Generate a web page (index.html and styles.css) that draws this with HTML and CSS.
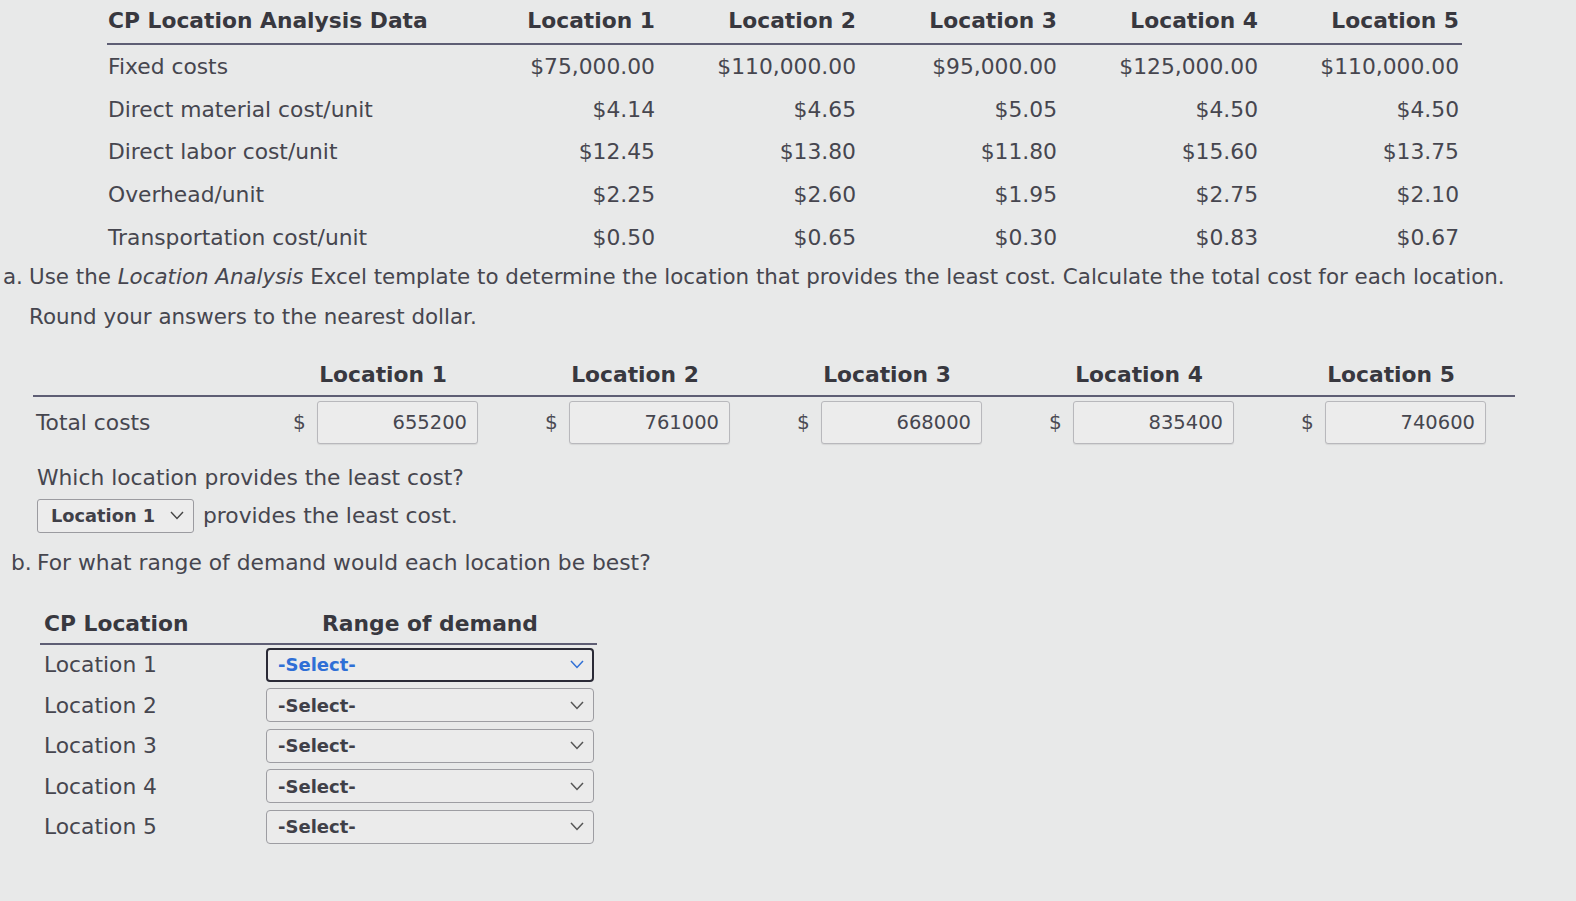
FILE: index.html
```html
<!DOCTYPE html>
<html lang="en">
<head>
<meta charset="utf-8">
<title>CP Location Analysis</title>
<link rel="stylesheet" href="styles.css">
</head>
<body>
<div class="page">
  <div class="data-table">
    <div class="dt-row dt-head">
      <div class="dt-label">CP Location Analysis Data</div>
      <div class="dt-num">Location 1</div>
      <div class="dt-num">Location 2</div>
      <div class="dt-num">Location 3</div>
      <div class="dt-num">Location 4</div>
      <div class="dt-num">Location 5</div>
    </div>
    <div class="dt-row">
      <div class="dt-label">Fixed costs</div>
      <div class="dt-num">$75,000.00</div>
      <div class="dt-num">$110,000.00</div>
      <div class="dt-num">$95,000.00</div>
      <div class="dt-num">$125,000.00</div>
      <div class="dt-num">$110,000.00</div>
    </div>
    <div class="dt-row">
      <div class="dt-label">Direct material cost/unit</div>
      <div class="dt-num">$4.14</div>
      <div class="dt-num">$4.65</div>
      <div class="dt-num">$5.05</div>
      <div class="dt-num">$4.50</div>
      <div class="dt-num">$4.50</div>
    </div>
    <div class="dt-row">
      <div class="dt-label">Direct labor cost/unit</div>
      <div class="dt-num">$12.45</div>
      <div class="dt-num">$13.80</div>
      <div class="dt-num">$11.80</div>
      <div class="dt-num">$15.60</div>
      <div class="dt-num">$13.75</div>
    </div>
    <div class="dt-row">
      <div class="dt-label">Overhead/unit</div>
      <div class="dt-num">$2.25</div>
      <div class="dt-num">$2.60</div>
      <div class="dt-num">$1.95</div>
      <div class="dt-num">$2.75</div>
      <div class="dt-num">$2.10</div>
    </div>
    <div class="dt-row">
      <div class="dt-label">Transportation cost/unit</div>
      <div class="dt-num">$0.50</div>
      <div class="dt-num">$0.65</div>
      <div class="dt-num">$0.30</div>
      <div class="dt-num">$0.83</div>
      <div class="dt-num">$0.67</div>
    </div>
  </div>

  <div class="question q-a">
    <span class="q-marker">a.</span>
    <span class="q-text">Use the <em>Location Analysis</em> Excel template to determine the location that provides the least cost. Calculate the total cost for each location.<br>Round your answers to the nearest dollar.</span>
  </div>

  <div class="cost-table">
    <div class="ct-row ct-head">
      <div class="ct-label"></div>
      <div class="ct-cell"><span class="ct-title">Location 1</span></div>
      <div class="ct-cell"><span class="ct-title">Location 2</span></div>
      <div class="ct-cell"><span class="ct-title">Location 3</span></div>
      <div class="ct-cell"><span class="ct-title">Location 4</span></div>
      <div class="ct-cell"><span class="ct-title">Location 5</span></div>
    </div>
    <div class="ct-row ct-body">
      <div class="ct-label">Total costs</div>
      <div class="ct-cell"><span class="dollar">$</span><input class="answer" type="text" value="655200" readonly></div>
      <div class="ct-cell"><span class="dollar">$</span><input class="answer" type="text" value="761000" readonly></div>
      <div class="ct-cell"><span class="dollar">$</span><input class="answer" type="text" value="668000" readonly></div>
      <div class="ct-cell"><span class="dollar">$</span><input class="answer" type="text" value="835400" readonly></div>
      <div class="ct-cell"><span class="dollar">$</span><input class="answer" type="text" value="740600" readonly></div>
    </div>
  </div>

  <p class="which">Which location provides the least cost?</p>
  <div class="least-row">
    <div class="mini-select">
      <span>Location 1</span>
      <svg class="chev" width="14" height="9" viewBox="0 0 14 9"><polyline points="1,1 7,7.5 13,1" fill="none" stroke="#444" stroke-width="1.4"/></svg>
    </div>
    <span class="least-text">provides the least cost.</span>
  </div>

  <div class="question q-b">
    <span class="q-marker">b.</span>
    <span class="q-text">For what range of demand would each location be best?</span>
  </div>

  <div class="range-table">
    <div class="rt-row rt-head">
      <div class="rt-label">CP Location</div>
      <div class="rt-sel-head">Range of demand</div>
    </div>
    <div class="rt-body">
      <div class="rt-row">
        <div class="rt-label">Location 1</div>
        <div class="select focused"><span>-Select-</span><svg class="chev" width="14" height="9" viewBox="0 0 14 9"><polyline points="1,1 7,7.5 13,1" fill="none" stroke="#2f6fd6" stroke-width="1.5"/></svg></div>
      </div>
      <div class="rt-row">
        <div class="rt-label">Location 2</div>
        <div class="select"><span>-Select-</span><svg class="chev" width="14" height="9" viewBox="0 0 14 9"><polyline points="1,1 7,7.5 13,1" fill="none" stroke="#555" stroke-width="1.5"/></svg></div>
      </div>
      <div class="rt-row">
        <div class="rt-label">Location 3</div>
        <div class="select"><span>-Select-</span><svg class="chev" width="14" height="9" viewBox="0 0 14 9"><polyline points="1,1 7,7.5 13,1" fill="none" stroke="#555" stroke-width="1.5"/></svg></div>
      </div>
      <div class="rt-row">
        <div class="rt-label">Location 4</div>
        <div class="select"><span>-Select-</span><svg class="chev" width="14" height="9" viewBox="0 0 14 9"><polyline points="1,1 7,7.5 13,1" fill="none" stroke="#555" stroke-width="1.5"/></svg></div>
      </div>
      <div class="rt-row">
        <div class="rt-label">Location 5</div>
        <div class="select"><span>-Select-</span><svg class="chev" width="14" height="9" viewBox="0 0 14 9"><polyline points="1,1 7,7.5 13,1" fill="none" stroke="#555" stroke-width="1.5"/></svg></div>
      </div>
    </div>
  </div>
</div>
</body>
</html>
```

FILE: styles.css
```css
* { box-sizing: border-box; }

html, body {
  margin: 0;
  padding: 0;
}

body {
  background: #e8e9e9;
  color: #46464f;
  font-family: "DejaVu Sans", Verdana, sans-serif;
  font-size: 21.8px;
  width: 1576px;
  height: 901px;
  overflow: hidden;
}

/* ---------- top data table ---------- */
.data-table {
  margin-left: 107px;
  width: 1355px;
}

.dt-row {
  display: grid;
  grid-template-columns: 350px repeat(5, 201px);
  height: 42.8px;
  align-items: center;
}

.dt-head {
  height: 45px;
  font-weight: bold;
  color: #38383f;
  border-bottom: 2px solid #5e5e74;
  padding-bottom: 2px;
}

.dt-label {
  padding-left: 1px;
  white-space: nowrap;
}

.dt-num {
  text-align: right;
  padding-right: 3px;
  white-space: nowrap;
}

/* ---------- questions ---------- */
.question {
  display: flex;
  line-height: 40px;
  white-space: nowrap;
}

.q-a {
  margin-top: -2px;
  padding-left: 3px;
  font-size: 21.4px;
}

.q-marker {
  width: 26px;
  flex: none;
}

.q-text em {
  font-style: italic;
}

.q-b {
  margin-top: 12px;
  padding-left: 11px;
  line-height: 36px;
}

/* ---------- total cost table ---------- */
.cost-table {
  margin-left: 33px;
  width: 1482px;
  margin-top: 17px;
}

.ct-row {
  display: grid;
  grid-template-columns: 250px 252px 252px 252px 252px 224px;
  align-items: center;
}

.ct-head {
  height: 43px;
  border-bottom: 2px solid #5e5e74;
  font-weight: bold;
  color: #38383f;
}

.ct-title {
  display: block;
  width: 180px;
  text-align: center;
}

.ct-body {
  padding-top: 4px;
}

.ct-label {
  padding-left: 3px;
}

.ct-cell {
  display: flex;
  align-items: center;
  padding-left: 10px;
}

.dollar {
  width: 24px;
  font-size: 20px;
  color: #4a4a52;
}

.answer {
  width: 161px;
  height: 43px;
  border: 1px solid #b8b8bc;
  border-radius: 3px;
  background: #ececec;
  box-shadow: 0 1px 1px rgba(0, 0, 0, 0.08);
  font-family: "DejaVu Sans", Verdana, sans-serif;
  font-size: 19.5px;
  color: #46464f;
  text-align: right;
  padding: 0 10px 0 6px;
  outline: none;
}

/* ---------- least cost ---------- */
.which {
  margin: 16px 0 0 37px;
  line-height: 36px;
}

.least-row {
  display: flex;
  align-items: center;
  margin: 3px 0 0 37px;
  gap: 9px;
}

.mini-select {
  width: 157px;
  height: 34px;
  border: 1px solid #9b9ba0;
  border-radius: 3px;
  background: #ececec;
  display: flex;
  align-items: center;
  justify-content: space-between;
  padding: 0 9px 0 13px;
  font-weight: bold;
  font-size: 17.8px;
  color: #404048;
}

/* ---------- range table ---------- */
.range-table {
  margin: 24px 0 0 40px;
  width: 557px;
}

.rt-row {
  display: grid;
  grid-template-columns: 226px 328px;
  align-items: center;
}

.rt-head {
  height: 40px;
  border-bottom: 2px solid #5e5e74;
  font-weight: bold;
  color: #38383f;
}

.rt-sel-head {
  text-align: center;
}

.rt-label {
  padding-left: 4px;
}

.rt-body {
  padding-top: 3px;
  display: flex;
  flex-direction: column;
  gap: 6.5px;
}

.select {
  height: 34px;
  border: 1px solid #9d9da2;
  border-radius: 4px;
  background: #ebebeb;
  display: flex;
  align-items: center;
  justify-content: space-between;
  padding: 0 9px 0 11px;
  font-weight: bold;
  font-size: 18px;
  color: #404048;
}

.select.focused {
  border: 2px solid #2a2a36;
  color: #2f6fd6;
  padding-left: 10px;
  padding-right: 8px;
}
```
